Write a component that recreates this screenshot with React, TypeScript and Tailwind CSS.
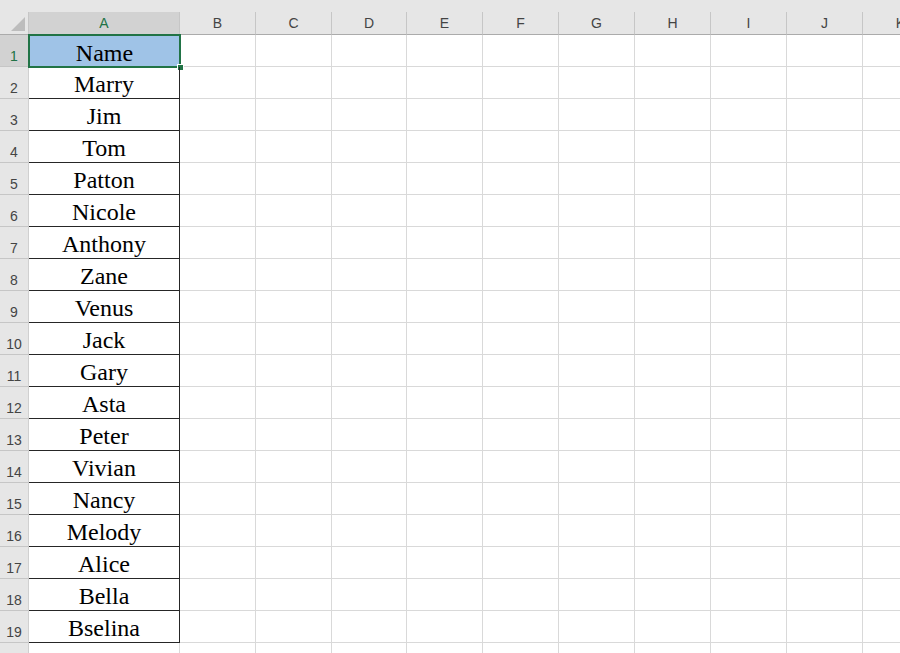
const columns = ["A", "B", "C", "D", "E", "F", "G", "H", "I", "J", "K"];

const names = [
  "Name",
  "Marry",
  "Jim",
  "Tom",
  "Patton",
  "Nicole",
  "Anthony",
  "Zane",
  "Venus",
  "Jack",
  "Gary",
  "Asta",
  "Peter",
  "Vivian",
  "Nancy",
  "Melody",
  "Alice",
  "Bella",
  "Bselina",
  "",
];

const headerFont = { fontFamily: '"Liberation Sans", Arial, sans-serif' };
const cellFont = { fontFamily: '"Liberation Serif", "Times New Roman", serif' };

export default function App() {
  return (
    <div className="w-[900px] h-[653px] overflow-hidden bg-white">
      {/* top band */}
      <div className="h-[12px] bg-[#e6e6e6]" />

      <div className="grid grid-cols-[29px_151px_76px_76px_75px_76px_76px_76px_76px_76px_76px_76px] grid-rows-[23px] auto-rows-[32px] w-max">
        {/* column header row */}
        <div className="bg-[#e6e6e6] border-b border-r border-b-[#ababab] border-r-[#c6c6c6] relative">
          <div className="absolute right-[3px] bottom-[3px] w-0 h-0 border-l-[14px] border-l-transparent border-b-[14px] border-b-[#bdbdbd]" />
        </div>
        {columns.map((c, i) => (
          <div
            key={c}
            style={headerFont}
            className={
              "flex items-center justify-center pt-[1px] text-[14px] border-b border-r border-b-[#ababab] border-r-[#c6c6c6] " +
              (i === 0 ? "bg-[#d2d2d2] text-[#217346]" : "bg-[#e6e6e6] text-[#444444]")
            }
          >
            {c}
          </div>
        ))}

        {/* data rows */}
        {names.map((name, r) => (
          <Row key={r} index={r + 1} name={name} />
        ))}
      </div>
    </div>
  );
}

function Row({ index, name }: { index: number; name: string }) {
  const selected = index === 1;
  const bordered = index >= 2 && index <= 19;

  return (
    <>
      <div
        style={headerFont}
        className={
          "flex items-start justify-center pt-[14px] text-[14px] leading-none border-b border-r " +
          (selected
            ? "bg-[#d2d2d2] text-[#217346] border-b-[#c6c6c6] border-r-[#217346]"
            : "bg-[#e6e6e6] text-[#444444] border-b-[#c6c6c6] border-r-[#d0d0d0]")
        }
      >
        {index}
      </div>

      <div
        style={cellFont}
        className={
          "relative flex items-end justify-center pb-[2px] text-[24px] leading-none text-black " +
          (selected
            ? "bg-[#9fc3e7]"
            : bordered
            ? "border-b border-r border-[#262626]"
            : "border-b border-r border-[#d9d9d9]")
        }
      >
        {name}
        {selected && (
          <>
            <div className="absolute -left-[1px] -top-[1px] -right-[1px] -bottom-[1px] border-2 border-[#217346] pointer-events-none" />
            <div className="absolute -right-[4px] -bottom-[4px] w-[7px] h-[7px] bg-[#217346] border border-white" />
          </>
        )}
      </div>

      {Array.from({ length: 10 }).map((_, i) => (
        <div key={i} className="border-b border-r border-[#d9d9d9]" />
      ))}
    </>
  );
}
